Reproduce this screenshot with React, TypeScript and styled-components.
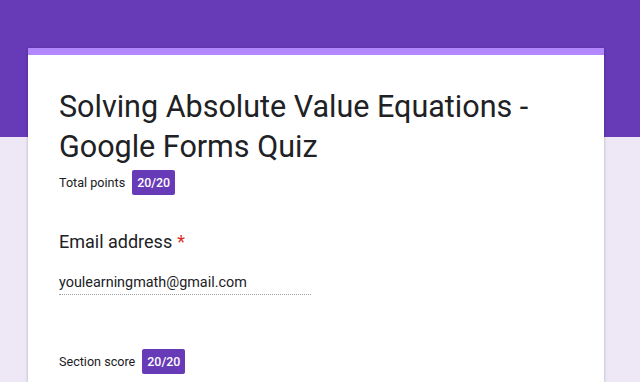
import styled, { createGlobalStyle } from 'styled-components';

const GlobalStyle = createGlobalStyle`
  html, body {
    margin: 0;
    padding: 0;
    font-family: Roboto, "Liberation Sans", Arial, sans-serif;
    color: #202124;
    overflow: hidden;
  }
`;

const Page = styled.div`
  min-height: 382px;
  padding-top: 48px;
  background: linear-gradient(#673ab7 0 137px, #ede7f6 137px);
  box-sizing: border-box;
`;

const Card = styled.div`
  margin-left: 28px;
  width: 576px;
  min-height: 340px;
  background: #fff;
  border-top: 7px solid #b388ff;
  box-shadow: 0 1px 3px rgba(0, 0, 0, 0.25);
  padding: 32px 30px 0 31px;
  box-sizing: border-box;
`;

const Title = styled.h1`
  margin: 0;
  font-size: 30.5px;
  line-height: 40px;
  font-weight: 400;
  color: #202124;
`;

const ScoreRow = styled.div<{ $gap: number }>`
  display: flex;
  align-items: center;
  gap: 7px;
  margin-top: ${(p) => p.$gap}px;
  font-size: 12.6px;
  color: #202124;
`;

const Badge = styled.span`
  display: inline-flex;
  align-items: center;
  justify-content: center;
  height: 25px;
  padding: 0 5px;
  border-radius: 2px;
  background: #673ab7;
  color: #fff;
  font-size: 12.4px;
  font-weight: 500;
`;

const Question = styled.div`
  margin-top: 35px;
  font-size: 18px;
  line-height: 24px;
`;

const Required = styled.span`
  color: #d93025;
  margin-left: 5px;
`;

const Answer = styled.div`
  margin-top: 19px;
  width: 252px;
  font-size: 14.4px;
  line-height: 20px;
  padding-bottom: 1px;
  border-bottom: 1px dotted #9e9e9e;
  color: #202124;
`;

export default function App() {
  return (
    <>
      <GlobalStyle />
      <Page>
        <Card>
          <Title>
            Solving Absolute Value Equations -<br />
            Google Forms Quiz
          </Title>
          <ScoreRow $gap={3}>
            Total points <Badge>20/20</Badge>
          </ScoreRow>
          <Question>
            Email address<Required>*</Required>
          </Question>
          <Answer>youlearningmath@gmail.com</Answer>
          <ScoreRow $gap={54}>
            Section score <Badge>20/20</Badge>
          </ScoreRow>
        </Card>
      </Page>
    </>
  );
}
